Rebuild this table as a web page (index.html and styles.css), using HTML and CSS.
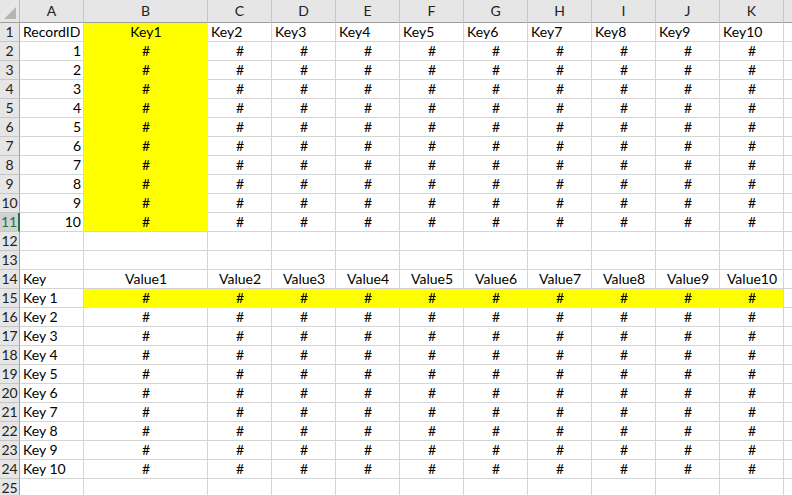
FILE: index.html
```html
<!DOCTYPE html>
<html>
<head>
<meta charset="utf-8">
<link rel="stylesheet" href="styles.css">
</head>
<body>
<div class="sheet">
  <div class="ch corner"><span class="tri"></span></div>
  <div class="ch">A</div><div class="ch">B</div><div class="ch">C</div><div class="ch">D</div><div class="ch">E</div><div class="ch">F</div><div class="ch">G</div><div class="ch">H</div><div class="ch">I</div><div class="ch">J</div><div class="ch">K</div><div class="ch last"></div>

  <div class="rh">1</div><div class="c">RecordID</div><div class="c y ctr">Key1</div><div class="c">Key2</div><div class="c">Key3</div><div class="c">Key4</div><div class="c">Key5</div><div class="c">Key6</div><div class="c">Key7</div><div class="c">Key8</div><div class="c">Key9</div><div class="c">Key10</div><div class="c"></div>
  <div class="rh">2</div><div class="c r">1</div><div class="c y ctr">#</div><div class="c ctr">#</div><div class="c ctr">#</div><div class="c ctr">#</div><div class="c ctr">#</div><div class="c ctr">#</div><div class="c ctr">#</div><div class="c ctr">#</div><div class="c ctr">#</div><div class="c ctr">#</div><div class="c"></div>
  <div class="rh">3</div><div class="c r">2</div><div class="c y ctr">#</div><div class="c ctr">#</div><div class="c ctr">#</div><div class="c ctr">#</div><div class="c ctr">#</div><div class="c ctr">#</div><div class="c ctr">#</div><div class="c ctr">#</div><div class="c ctr">#</div><div class="c ctr">#</div><div class="c"></div>
  <div class="rh">4</div><div class="c r">3</div><div class="c y ctr">#</div><div class="c ctr">#</div><div class="c ctr">#</div><div class="c ctr">#</div><div class="c ctr">#</div><div class="c ctr">#</div><div class="c ctr">#</div><div class="c ctr">#</div><div class="c ctr">#</div><div class="c ctr">#</div><div class="c"></div>
  <div class="rh">5</div><div class="c r">4</div><div class="c y ctr">#</div><div class="c ctr">#</div><div class="c ctr">#</div><div class="c ctr">#</div><div class="c ctr">#</div><div class="c ctr">#</div><div class="c ctr">#</div><div class="c ctr">#</div><div class="c ctr">#</div><div class="c ctr">#</div><div class="c"></div>
  <div class="rh">6</div><div class="c r">5</div><div class="c y ctr">#</div><div class="c ctr">#</div><div class="c ctr">#</div><div class="c ctr">#</div><div class="c ctr">#</div><div class="c ctr">#</div><div class="c ctr">#</div><div class="c ctr">#</div><div class="c ctr">#</div><div class="c ctr">#</div><div class="c"></div>
  <div class="rh">7</div><div class="c r">6</div><div class="c y ctr">#</div><div class="c ctr">#</div><div class="c ctr">#</div><div class="c ctr">#</div><div class="c ctr">#</div><div class="c ctr">#</div><div class="c ctr">#</div><div class="c ctr">#</div><div class="c ctr">#</div><div class="c ctr">#</div><div class="c"></div>
  <div class="rh">8</div><div class="c r">7</div><div class="c y ctr">#</div><div class="c ctr">#</div><div class="c ctr">#</div><div class="c ctr">#</div><div class="c ctr">#</div><div class="c ctr">#</div><div class="c ctr">#</div><div class="c ctr">#</div><div class="c ctr">#</div><div class="c ctr">#</div><div class="c"></div>
  <div class="rh">9</div><div class="c r">8</div><div class="c y ctr">#</div><div class="c ctr">#</div><div class="c ctr">#</div><div class="c ctr">#</div><div class="c ctr">#</div><div class="c ctr">#</div><div class="c ctr">#</div><div class="c ctr">#</div><div class="c ctr">#</div><div class="c ctr">#</div><div class="c"></div>
  <div class="rh">10</div><div class="c r">9</div><div class="c y ctr">#</div><div class="c ctr">#</div><div class="c ctr">#</div><div class="c ctr">#</div><div class="c ctr">#</div><div class="c ctr">#</div><div class="c ctr">#</div><div class="c ctr">#</div><div class="c ctr">#</div><div class="c ctr">#</div><div class="c"></div>
  <div class="rh sel">11</div><div class="c r">10</div><div class="c y yend ctr">#</div><div class="c ctr">#</div><div class="c ctr">#</div><div class="c ctr">#</div><div class="c ctr">#</div><div class="c ctr">#</div><div class="c ctr">#</div><div class="c ctr">#</div><div class="c ctr">#</div><div class="c ctr">#</div><div class="c"></div>
  <div class="rh">12</div><div class="c"></div><div class="c"></div><div class="c"></div><div class="c"></div><div class="c"></div><div class="c"></div><div class="c"></div><div class="c"></div><div class="c"></div><div class="c"></div><div class="c"></div><div class="c"></div>
  <div class="rh">13</div><div class="c"></div><div class="c"></div><div class="c"></div><div class="c"></div><div class="c"></div><div class="c"></div><div class="c"></div><div class="c"></div><div class="c"></div><div class="c"></div><div class="c"></div><div class="c"></div>
  <div class="rh">14</div><div class="c">Key</div><div class="c ctr">Value1</div><div class="c ctr">Value2</div><div class="c ctr">Value3</div><div class="c ctr">Value4</div><div class="c ctr">Value5</div><div class="c ctr">Value6</div><div class="c ctr">Value7</div><div class="c ctr">Value8</div><div class="c ctr">Value9</div><div class="c ctr">Value10</div><div class="c"></div>
  <div class="rh">15</div><div class="c">Key 1</div><div class="c h ctr">#</div><div class="c h ctr">#</div><div class="c h ctr">#</div><div class="c h ctr">#</div><div class="c h ctr">#</div><div class="c h ctr">#</div><div class="c h ctr">#</div><div class="c h ctr">#</div><div class="c h ctr">#</div><div class="c h hend ctr">#</div><div class="c"></div>
  <div class="rh">16</div><div class="c">Key 2</div><div class="c ctr">#</div><div class="c ctr">#</div><div class="c ctr">#</div><div class="c ctr">#</div><div class="c ctr">#</div><div class="c ctr">#</div><div class="c ctr">#</div><div class="c ctr">#</div><div class="c ctr">#</div><div class="c ctr">#</div><div class="c"></div>
  <div class="rh">17</div><div class="c">Key 3</div><div class="c ctr">#</div><div class="c ctr">#</div><div class="c ctr">#</div><div class="c ctr">#</div><div class="c ctr">#</div><div class="c ctr">#</div><div class="c ctr">#</div><div class="c ctr">#</div><div class="c ctr">#</div><div class="c ctr">#</div><div class="c"></div>
  <div class="rh">18</div><div class="c">Key 4</div><div class="c ctr">#</div><div class="c ctr">#</div><div class="c ctr">#</div><div class="c ctr">#</div><div class="c ctr">#</div><div class="c ctr">#</div><div class="c ctr">#</div><div class="c ctr">#</div><div class="c ctr">#</div><div class="c ctr">#</div><div class="c"></div>
  <div class="rh">19</div><div class="c">Key 5</div><div class="c ctr">#</div><div class="c ctr">#</div><div class="c ctr">#</div><div class="c ctr">#</div><div class="c ctr">#</div><div class="c ctr">#</div><div class="c ctr">#</div><div class="c ctr">#</div><div class="c ctr">#</div><div class="c ctr">#</div><div class="c"></div>
  <div class="rh">20</div><div class="c">Key 6</div><div class="c ctr">#</div><div class="c ctr">#</div><div class="c ctr">#</div><div class="c ctr">#</div><div class="c ctr">#</div><div class="c ctr">#</div><div class="c ctr">#</div><div class="c ctr">#</div><div class="c ctr">#</div><div class="c ctr">#</div><div class="c"></div>
  <div class="rh">21</div><div class="c">Key 7</div><div class="c ctr">#</div><div class="c ctr">#</div><div class="c ctr">#</div><div class="c ctr">#</div><div class="c ctr">#</div><div class="c ctr">#</div><div class="c ctr">#</div><div class="c ctr">#</div><div class="c ctr">#</div><div class="c ctr">#</div><div class="c"></div>
  <div class="rh">22</div><div class="c">Key 8</div><div class="c ctr">#</div><div class="c ctr">#</div><div class="c ctr">#</div><div class="c ctr">#</div><div class="c ctr">#</div><div class="c ctr">#</div><div class="c ctr">#</div><div class="c ctr">#</div><div class="c ctr">#</div><div class="c ctr">#</div><div class="c"></div>
  <div class="rh">23</div><div class="c">Key 9</div><div class="c ctr">#</div><div class="c ctr">#</div><div class="c ctr">#</div><div class="c ctr">#</div><div class="c ctr">#</div><div class="c ctr">#</div><div class="c ctr">#</div><div class="c ctr">#</div><div class="c ctr">#</div><div class="c ctr">#</div><div class="c"></div>
  <div class="rh">24</div><div class="c">Key 10</div><div class="c ctr">#</div><div class="c ctr">#</div><div class="c ctr">#</div><div class="c ctr">#</div><div class="c ctr">#</div><div class="c ctr">#</div><div class="c ctr">#</div><div class="c ctr">#</div><div class="c ctr">#</div><div class="c ctr">#</div><div class="c"></div>
  <div class="rh">25</div><div class="c"></div><div class="c"></div><div class="c"></div><div class="c"></div><div class="c"></div><div class="c"></div><div class="c"></div><div class="c"></div><div class="c"></div><div class="c"></div><div class="c"></div><div class="c"></div>
</div>
</body>
</html>
```
FILE: styles.css
```css
html, body {
  margin: 0;
  padding: 0;
  background: #ffffff;
  overflow: hidden;
}
.sheet {
  display: grid;
  grid-template-columns: 20px 64px 124px repeat(9, 64px) 40px;
  grid-template-rows: 23px repeat(25, 19px);
  font-family: Lato, "Liberation Sans", sans-serif;
  font-size: 14px;
  color: #000;
}
.ch {
  box-sizing: border-box;
  background: #e6e6e6;
  border-right: 1px solid #c6c6c6;
  border-bottom: 1px solid #9e9e9e;
  color: #222;
  text-align: center;
  line-height: 22px;
  font-size: 14px;
}
.ch.corner {
  position: relative;
  border-right: 1px solid #bcbcbc;
}
.tri {
  position: absolute;
  right: 3px;
  bottom: 3px;
  width: 0;
  height: 0;
  border-left: 12px solid transparent;
  border-bottom: 12px solid #b4b4b4;
}
.rh {
  box-sizing: border-box;
  background: #e6e6e6;
  border-right: 1px solid #9e9e9e;
  border-bottom: 1px solid #c6c6c6;
  color: #222;
  text-align: center;
  line-height: 18px;
  font-size: 14px;
}
.rh.sel {
  background: #d2d2d2;
  color: #217346;
  border-right: 2px solid #217346;
}
.c {
  box-sizing: border-box;
  border-right: 1px solid #d4d4d4;
  border-bottom: 1px solid #d4d4d4;
  line-height: 18px;
  padding: 0 2px 0 3px;
  white-space: nowrap;
  overflow: hidden;
}
.r { text-align: right; }
.ctr { text-align: center; }
.y {
  background: #ffff00;
  border-right-color: #ffff00;
  border-bottom-color: #ffff00;
}
.y.yend { border-bottom-color: #d4d4d4; }
.h {
  background: #ffff00;
  border-right-color: #ffff00;
  border-bottom-color: #ffff00;
}
.h.hend { border-right-color: #d4d4d4; }
```
